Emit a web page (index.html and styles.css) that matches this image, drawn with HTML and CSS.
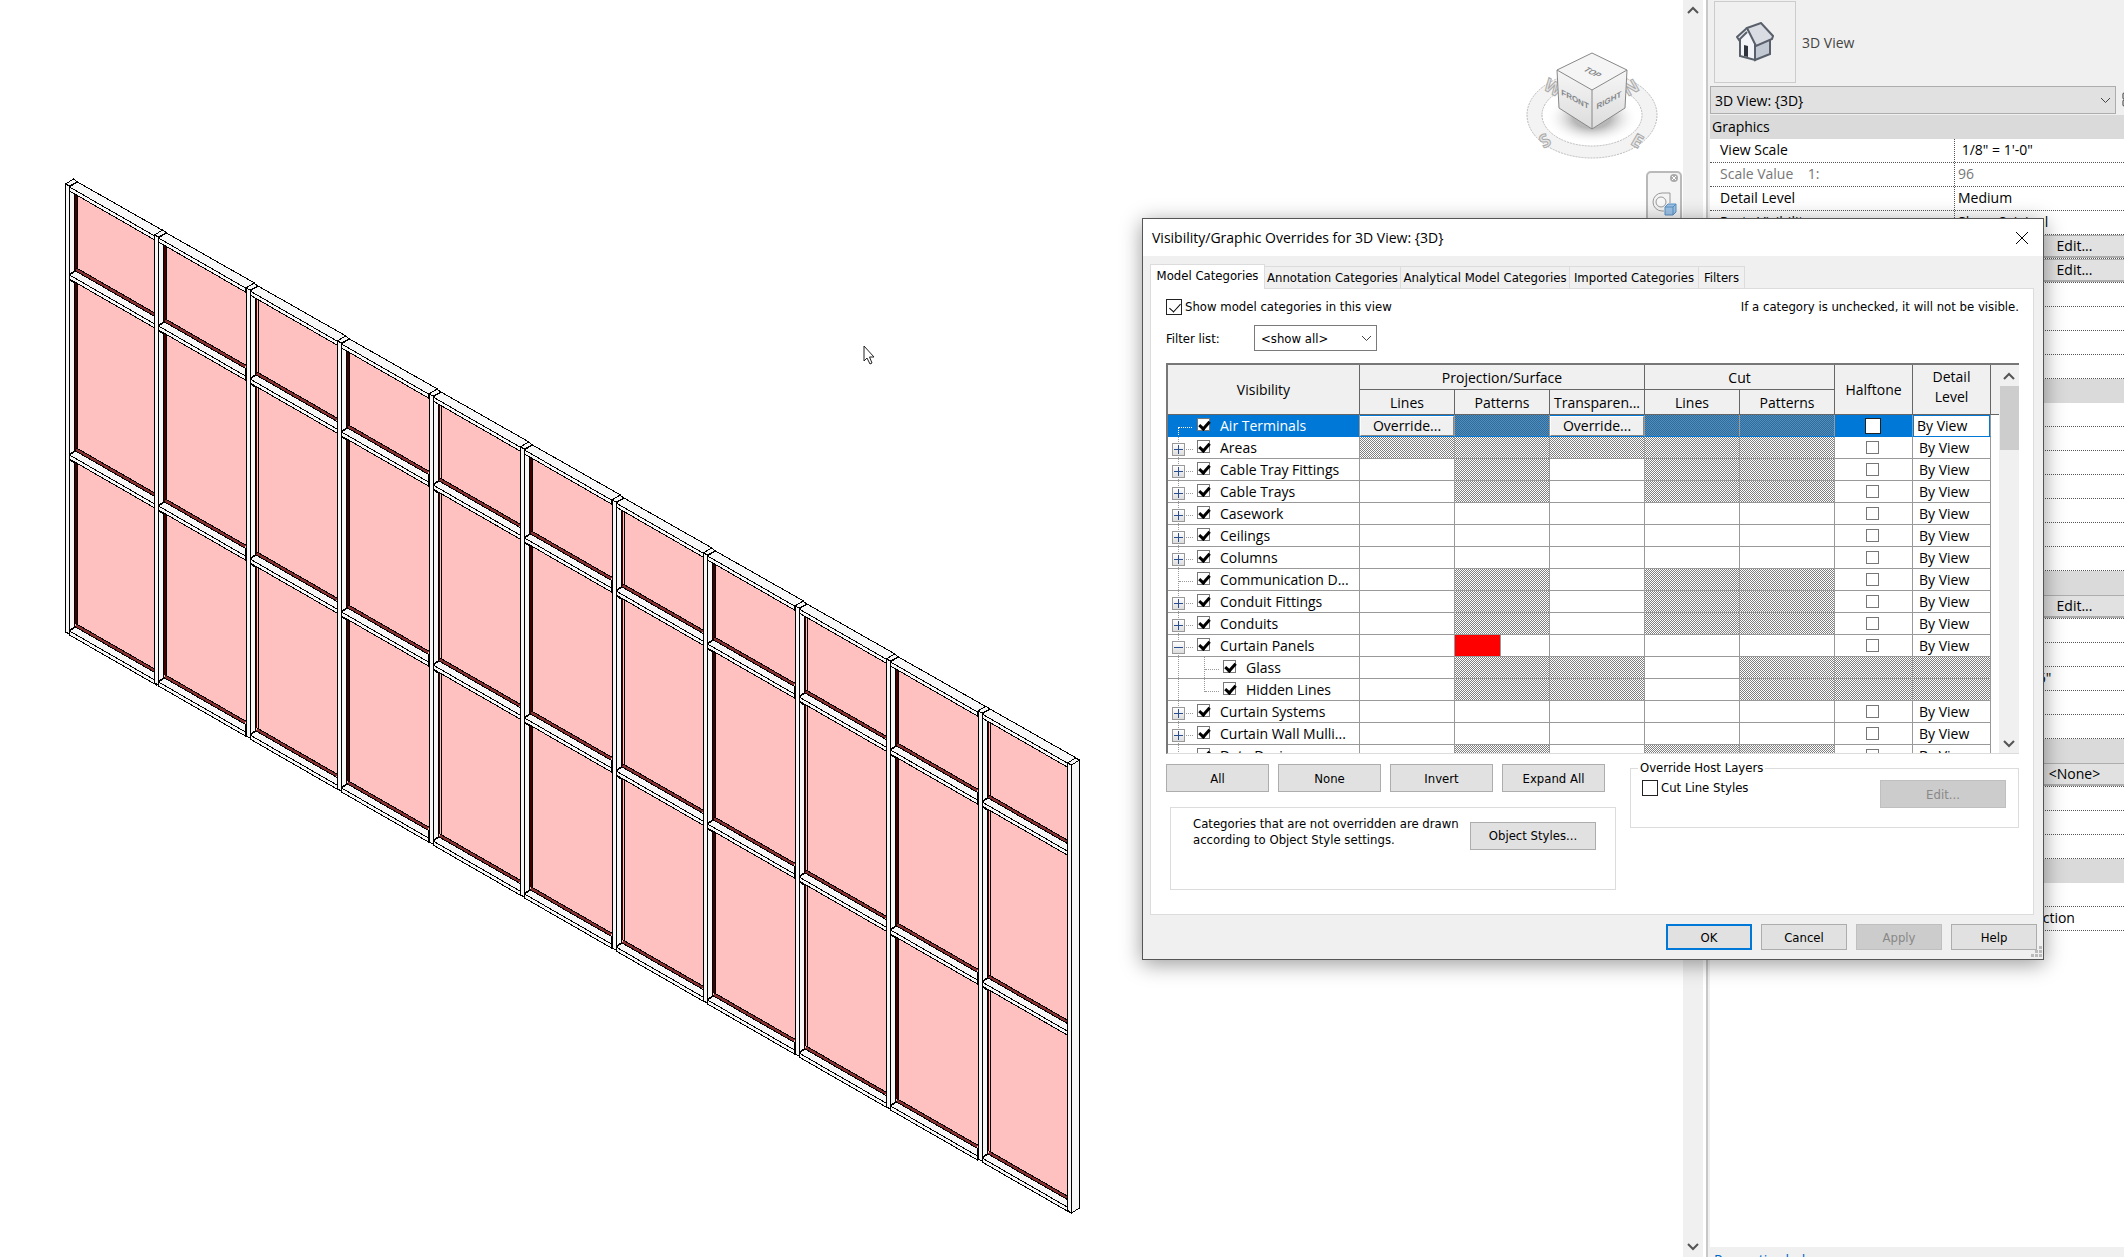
FILE: index.html
```html
<!DOCTYPE html>
<html lang="en">
<head>
    <meta charset="UTF-8">
    <meta name="viewport" content="width=device-width, initial-scale=1.0">
    <title>Visibility/Graphic Overrides</title>
    <link rel="stylesheet" href="styles.css">
</head>
<body>
    <div class="workspace">
        <main class="viewport">
            <svg class="model" width="1120" height="1257" viewBox="0 0 1120 1257" aria-hidden="true">
                <defs>
                    <!-- one bay: glass, rails and the mullion on its left -->
                    <g id="bay">
                        <path class="glass" d="M9 10 L91 57 V497 L9 449 Z"/>
                        <path class="reveal" d="M10 11 V440"/>
                        <path class="edge" d="M12 12 V440"/>
                        <g id="rail">
                            <path class="hatch" d="M11 85.5 L91 131.5"/>
                            <path class="edge" d="M11 84 L91 130"/>
                            <path class="face" d="M4 91 L10 87 L91 133.5 V145 L4 95 Z"/>
                            <path class="edge" d="M4 91 L91 141"/>
                        </g>
                        <use href="#rail" y="180"/>
                        <use href="#rail" y="356"/>
                        <path class="face" d="M4 3 L9 6 V87 L4 90 Z M4 96 L9 99 V267 L4 270 Z M4 276 L9 279 V443 L4 446 Z"/>
                        <path class="top" d="M4 3 L12 -2 L100 48 L91 53 V57 L4 7 Z"/>
                        <path class="edge" d="M4 3 L91 53"/>
                        <path class="face" d="M0 0 L4 2 V450 L0 448 Z"/>
                        <path class="top" d="M0 0 L8 -5 L12 -2 L4 2 Z"/>
                    </g>
                </defs>
                <g id="bays"></g>
                <g transform="translate(1067.5 763)">
                    <path class="face" d="M0 0 L4 2 V450 L0 447 Z"/>
                    <path class="face" d="M4 2 L12 -3 V445 L4 450 Z"/>
                    <path class="top" d="M0 0 L8 -5 L12 -3 L4 2 Z"/>
                </g>
            </svg>

            <svg class="cursor" width="12" height="20" viewBox="0 0 12 20" aria-hidden="true">
                <path d="M1 1 V16 L4 13 L7 19 L9 18 L6.500 12 H11 Z" fill="#fff" stroke="#222"/>
            </svg>

            <svg class="view-cube" width="132" height="110" viewBox="0 0 132 110" aria-hidden="true">
                <defs>
                    <radialGradient id="shade">
                        <stop offset="0.4" stop-color="#999" stop-opacity="0.7"/>
                        <stop offset="1" stop-color="#fff" stop-opacity="0"/>
                    </radialGradient>
                    <linearGradient id="side" x1="0" y1="0" x2="0" y2="1">
                        <stop offset="0" stop-color="#f6f6f6"/>
                        <stop offset="1" stop-color="#dcdcdc"/>
                    </linearGradient>
                </defs>
                <path class="ring" fill-rule="evenodd" d="M1 63 a65 43 0 1 0 130 0 a65 43 0 1 0 -130 0 Z M16 63 a50 31 0 1 0 100 0 a50 31 0 1 0 -100 0 Z"/>
                <ellipse cx="66" cy="66" rx="46" ry="26" fill="url(#shade)"/>
                <g class="compass" text-anchor="middle">
                    <text x="19" y="95" transform="rotate(-30 19 89)">S</text>
                    <text x="111" y="95" transform="rotate(30 111 89)">E</text>
                    <text x="27" y="42" transform="rotate(30 27 36)">W</text>
                    <text x="105" y="42" transform="rotate(-30 105 36)">N</text>
                </g>
                <path d="M31 18 L66 38 V77 L33 56 Z" fill="url(#side)"/>
                <path d="M101 18 L66 38 V77 L99 56 Z" fill="url(#side)"/>
                <path d="M66 1 L101 18 L66 38 L31 18 Z" fill="#f5f5f5"/>
                <path class="cube-edges" d="M66 1 L101 18 L99 56 L66 77 L33 56 L31 18 Z M31 18 L66 38 L101 18 M66 38 V77"/>
                <g class="cube-label">
                    <text transform="translate(49 50) skewY(28)" text-anchor="middle">FRONT</text>
                    <text transform="translate(83 51) skewY(-28)" text-anchor="middle">RIGHT</text>
                    <text transform="translate(64 22) rotate(28) skewX(-30)" text-anchor="middle">TOP</text>
                </g>
            </svg>

            <svg class="nav-bar" width="36" height="80" viewBox="0 0 36 80" aria-hidden="true">
                <rect x="1" y="1" width="34" height="90" rx="4" fill="#f4f4f4" stroke="#b9b9b9" stroke-width="2"/>
                <circle cx="28" cy="7" r="4" fill="#aaa"/>
                <path d="M26 5 L30 9 M30 5 L26 9" stroke="#fff"/>
                <path d="M24 22 H16 A9 9 0 1 0 16 40 H18 M24 22 V32" fill="none" stroke="#999"/>
                <circle cx="15" cy="31" r="5" fill="#f8f8f8" stroke="#999"/>
                <path d="M19 36 L22 33 H30 V41 L27 44 H19 Z" fill="#9cc3e8" stroke="#5b8fc0"/>
                <path d="M19 36 H27 V44 M27 36 L30 33" fill="none" stroke="#5b8fc0"/>
            </svg>
        </main>

        <div class="view-scroll">
            <svg width="12" height="8" viewBox="0 0 12 8"><path d="M1 7 L6 2 L11 7"/></svg>
            <svg width="12" height="8" viewBox="0 0 12 8"><path d="M1 1 L6 6 L11 1"/></svg>
        </div>

        <aside class="properties">
            <div class="type-header">
                <div class="type-image">
                    <svg width="38" height="40" viewBox="0 0 38 40" aria-hidden="true">
                        <path d="M4 15 L13 6 L19 21 V38 L4 34 Z" fill="#f2f4f7" stroke="#59606b" stroke-width="2"/>
                        <path d="M19 22 L34 14 V32 L19 38 Z" fill="#c3c9d2" stroke="#59606b" stroke-width="2"/>
                        <path d="M11 6 L25 1 L37 14 L36 17 L20 24 Z" fill="#d9dde3" stroke="#59606b" stroke-width="2"/>
                        <path d="M11 6 L1 15 L3 18 L11 10" fill="#e8eaee" stroke="#59606b" stroke-width="2"/>
                        <path d="M8 23 L12 24 V35 L8 34 Z" fill="#30353d"/>
                    </svg>
                </div>
                <span>3D View</span>
            </div>
            <div class="type-row">
                <div class="select type-select">
                    <select aria-label="Instance">
                        <option>3D View: {3D}</option>
                    </select>
                    <svg width="11" height="7" viewBox="0 0 11 7"><path d="M1 1 L5.500 5.500 L10 1"/></svg>
                </div>
                <svg class="edit-type" width="16" height="16" viewBox="0 0 16 16"><rect x="1" y="1" width="13" height="6" rx="1"/><rect x="1" y="8" width="13" height="6" rx="1"/></svg>
            </div>
            <div class="prop-list" id="props"></div>
            <div class="help"><a href="#">Properties help</a></div>
        </aside>
    </div>

    <section class="dialog" role="dialog" aria-labelledby="dialog-title">
        <header class="title-bar">
            <h1 id="dialog-title">Visibility/Graphic Overrides for 3D View: {3D}</h1>
            <button class="close" aria-label="Close">
                <svg width="14" height="14" viewBox="0 0 14 14"><path d="M1 1 L13 13 M13 1 L1 13"/></svg>
            </button>
        </header>

        <nav class="tabs">
            <button class="tab active">Model Categories</button>
            <button class="tab">Annotation Categories</button>
            <button class="tab">Analytical Model Categories</button>
            <button class="tab">Imported Categories</button>
            <button class="tab">Filters</button>
        </nav>

        <div class="page">
            <div class="page-top">
                <label class="check"><input type="checkbox" class="box" checked>Show model categories in this view</label>
                <p class="note">If a category is unchecked, it will not be visible.</p>
            </div>
            <div class="filter">
                <label for="filter-list">Filter list:</label>
                <div class="select filter-select">
                    <select id="filter-list">
                        <option>&lt;show all&gt;</option>
                    </select>
                    <svg width="11" height="7" viewBox="0 0 11 7"><path d="M1 1 L5.500 5.500 L10 1"/></svg>
                </div>
            </div>

            <div class="grid">
                <table>
                    <colgroup>
                        <col class="col-name">
                        <col span="5" class="col-override">
                        <col span="2" class="col-level">
                    </colgroup>
                    <thead>
                        <tr>
                            <th rowspan="2">Visibility</th>
                            <th colspan="3">Projection/Surface</th>
                            <th colspan="2">Cut</th>
                            <th rowspan="2">Halftone</th>
                            <th rowspan="2" class="two-line">Detail Level</th>
                        </tr>
                        <tr>
                            <th>Lines</th>
                            <th>Patterns</th>
                            <th>Transparen...</th>
                            <th>Lines</th>
                            <th>Patterns</th>
                        </tr>
                    </thead>
                    <tbody id="rows"></tbody>
                </table>
                <div class="gutter"></div>
                <div class="grid-scroll">
                    <svg width="12" height="8" viewBox="0 0 12 8"><path d="M1 7 L6 2 L11 7"/></svg>
                    <div class="thumb"></div>
                    <svg width="12" height="8" viewBox="0 0 12 8"><path d="M1 1 L6 6 L11 1"/></svg>
                </div>
            </div>

            <div class="page-bottom">
                <div class="bottom-left">
                    <div class="bulk">
                        <button class="btn">All</button>
                        <button class="btn">None</button>
                        <button class="btn">Invert</button>
                        <button class="btn">Expand All</button>
                    </div>
                    <div class="group styles-group">
                        <p>Categories that are not overridden are drawn according to Object Style settings.</p>
                        <button class="btn">Object Styles...</button>
                    </div>
                </div>
                <fieldset class="group host-group">
                    <legend>Override Host Layers</legend>
                    <label class="check"><input type="checkbox" class="box">Cut Line Styles</label>
                    <button class="btn" disabled>Edit...</button>
                </fieldset>
            </div>
        </div>

        <footer class="dialog-footer">
            <button class="btn default">OK</button>
            <button class="btn">Cancel</button>
            <button class="btn" disabled>Apply</button>
            <button class="btn">Help</button>
        </footer>
        <svg class="grip" width="12" height="12" viewBox="0 0 12 12" aria-hidden="true">
            <path d="M9 0 h3 v3 h-3 Z M9 4 h3 v3 h-3 Z M9 8 h3 v3 h-3 Z M5 4 h3 v3 h-3 Z M5 8 h3 v3 h-3 Z M1 8 h3 v3 h-3 Z"/>
        </svg>
    </section>

    <script>
        // cells: proj lines, proj patterns, transparency, cut lines, cut patterns
        // "x" = not available, "." = empty, "o" = override button, "r" = red pattern
        const categories = [
            { name: 'Air Terminals', cells: 'oxoxx', selected: true, first: true },
            { name: 'Areas', cells: 'xxxxx', node: '+' },
            { name: 'Cable Tray Fittings', cells: '.x.xx', node: '+' },
            { name: 'Cable Trays', cells: '.x.xx', node: '+' },
            { name: 'Casework', cells: '.....', node: '+' },
            { name: 'Ceilings', cells: '.....', node: '+' },
            { name: 'Columns', cells: '.....', node: '+' },
            { name: 'Communication D...', cells: '.x.xx' },
            { name: 'Conduit Fittings', cells: '.x.xx', node: '+' },
            { name: 'Conduits', cells: '.x.xx', node: '+' },
            { name: 'Curtain Panels', cells: '.r...', node: '-' },
            { name: 'Glass', cells: '.xx.x', child: true },
            { name: 'Hidden Lines', cells: '.xx.x', child: true, last: true },
            { name: 'Curtain Systems', cells: '.....', node: '+' },
            { name: 'Curtain Wall Mulli...', cells: '.....', node: '+' },
            { name: 'Data Devices', cells: '.x.xx' }
        ];

        function overrideCell(type) {
            if (type === 'x') return '<td class="na"></td>';
            if (type === 'o') return '<td><button class="override">Override...</button></td>';
            if (type === 'r') return '<td><div class="swatch"></div></td>';
            return '<td></td>';
        }

        document.getElementById('rows').innerHTML = categories.map((c, i) => {
            const guide = ['guide', c.first ? 'first' : '', c.child ? 'plain' : ''].join(' ');
            const node = c.node ? `<button class="node ${c.node === '+' ? 'plus' : ''}" aria-label="Expand ${c.name}"></button>` : '';
            const sub = c.child ? `<span class="guide sub ${c.last ? 'last' : ''}"></span>` : '';
            const level = c.selected
                ? `<select class="level" aria-label="Detail level"><option>By View</option></select>`
                : 'By View';
            const tail = c.child
                ? '<td class="na"></td><td class="na"></td>'
                : `<td class="half"><input type="checkbox" aria-label="Halftone ${c.name}"></td><td class="by-view">${level}</td>`;
            return `<tr class="${c.selected ? 'selected' : ''}">
                <td class="name"><div class="tree"><span class="${guide}">${node}</span>${sub}<input type="checkbox" id="cat${i}" checked><label for="cat${i}">${c.name}</label></div></td>
                ${[...c.cells].map(overrideCell).join('')}${tail}
            </tr>`;
        }).join('');

        // instance properties, h = group header, b = button in the value column
        const props = [
            ['h', 'Graphics'], ['', 'View Scale', '&nbsp;1/8" = 1\'-0"'], ['dim', 'Scale Value&nbsp;&nbsp;&nbsp; 1:', '96'],
            ['', 'Detail Level', 'Medium'], ['', 'Parts Visibility', 'Show Original'],
            ['b', '', 'Edit...'], ['b', '', 'Edit...'], [''], [''], [''], [''],
            ['h', ''], [''], [''], [''], [''], [''], [''], [''],
            ['h', ''], ['b', '', 'Edit...'], [''], [''], ['', '', '132\' - 10 5/16"'], ['', '', '26\' - 11 7/32"'], [''],
            ['h', ''], ['b', '', '&lt;None&gt;'], [''], [''], [''],
            ['h', ''], [''], ['', '', 'New Construction']
        ];

        document.getElementById('props').innerHTML = props.map(([kind, name = '', value = '']) => {
            if (kind === 'h') return `<div class="prop-group">${name}</div>`;
            const val = kind === 'b' ? `<button>${value}</button>` : value;
            return `<div class="prop ${kind}"><span>${name}</span><span class="value">${val}</span></div>`;
        }).join('');

        // corner bay is 3 units narrower than the others
        let bays = '';
        for (let i = 0; i < 11; i++) {
            const x = i === 0 ? 65.5 : 63 + i * 91.5;
            const y = 184 + (x - 65.5) * 0.578;
            bays += `<use href="#bay" x="${x}" y="${Math.round(y)}"/>`;
        }
        document.getElementById('bays').innerHTML = bays;
    </script>
</body>
</html>
```
FILE: styles.css
```css
* {
    margin: 0;
    padding: 0;
    box-sizing: border-box;
}

body {
    background: #fff;
    color: #000;
    font-family: 'Open Sans', 'Noto Sans', sans-serif;
    font-size: 14px;
    height: 100vh;
    overflow: hidden;
}

button,
select,
input {
    font: inherit;
    color: inherit;
}

.workspace {
    display: flex;
    height: 100vh;
}

.viewport {
    flex: 1;
    position: relative;
    overflow: hidden;
}

/* model */
.model {
    display: block;
    shape-rendering: crispEdges;
}

.glass {
    fill: #ffc0c0;
}

.face,
.top {
    fill: #f7f7f7;
    stroke: #000;
}

.edge {
    fill: none;
    stroke: #000;
}

.reveal {
    fill: none;
    stroke: #400000;
    stroke-width: 2;
}

.hatch {
    fill: none;
    stroke: #8a3030;
    stroke-width: 3;
}

.cursor {
    position: absolute;
    left: 863px;
    top: 345px;
}

.view-cube {
    position: absolute;
    right: 25px;
    top: 52px;
}

.ring {
    fill: #f3f3f3;
    stroke: #bbb;
    stroke-dasharray: 2 1;
}

.compass {
    font-size: 18px;
    font-weight: bold;
    fill: #e6e6e6;
    stroke: #aaa;
}

.cube-edges {
    fill: none;
    stroke: #888;
}

.cube-label {
    font-family: 'Liberation Sans', sans-serif;
    font-size: 8px;
    font-weight: bold;
    fill: #85888b;
}

.nav-bar {
    position: absolute;
    right: 1px;
    top: 171px;
}

.view-scroll {
    width: 20px;
    background: #f0f0f0;
    display: flex;
    flex-direction: column;
    justify-content: space-between;
    align-items: center;
    padding: 6px 0;
}

.view-scroll path,
.grid-scroll path {
    fill: none;
    stroke: #555;
    stroke-width: 2;
}

/* properties palette */
.properties {
    flex: 0 0 418px;
    margin-left: 3px;
    border-left: 2px solid #c8c8c8;
    padding-left: 2px;
    background: #f0f0f0;
    display: flex;
    flex-direction: column;
    overflow: hidden;
}

.type-header {
    display: flex;
    align-items: center;
    gap: 6px;
    height: 86px;
    padding: 0 0 2px 4px;
    color: #444;
}

.type-image {
    width: 82px;
    height: 82px;
    border: 1px solid #ccc;
    display: flex;
    align-items: center;
    justify-content: center;
}

.type-row {
    display: flex;
    align-items: center;
    gap: 6px;
    height: 29px;
    padding-bottom: 1px;
}

.select {
    position: relative;
    display: flex;
    align-items: center;
}

.select select {
    appearance: none;
    width: 100%;
    height: 100%;
    border: 1px solid #7a7a7a;
    border-radius: 0;
    background: #fff;
    padding-left: 6px;
}

.select svg {
    position: absolute;
    right: 5px;
    fill: none;
    stroke: #444;
}

.type-select {
    flex: 0 0 406px;
    height: 28px;
}

.type-select select {
    background: #e1e1e1;
    border-color: #adadad;
    padding-left: 4px;
}

.edit-type {
    flex: none;
    fill: #fff;
    stroke: #333;
}

.prop-list {
    flex: 1;
    background: #fff;
}

.prop-group {
    height: 24px;
    line-height: 23px;
    padding-left: 2px;
    background: #dadada;
}

.prop {
    display: grid;
    grid-template-columns: 244px 240px;
    height: 24px;
    line-height: 22px;
    border-bottom: 1px dotted #555;
}

.prop > span {
    padding-left: 10px;
    white-space: nowrap;
}

.prop > .value {
    border-left: 1px dotted #555;
    padding-left: 3px;
}

.prop.dim {
    color: #777;
}

.prop.b > .value {
    padding: 0;
}

.prop button {
    display: block;
    width: 100%;
    height: 23px;
    line-height: 20px;
    border: 1px solid #adadad;
    border-bottom-width: 2px;
    background: #e1e1e1;
}

.help {
    height: 10px;
    padding: 5px 0 0 4px;
    line-height: 16px;
    overflow: hidden;
}

.help a {
    color: #0066cc;
    text-decoration: none;
}

/* dialog */
.dialog {
    position: absolute;
    top: 218px;
    right: 80px;
    width: 902px;
    border: 1px solid #555;
    background: #f0f0f0;
    box-shadow: 0 4px 20px rgba(0, 0, 0, 0.4);
    font-family: 'DejaVu Sans Condensed', 'DejaVu Sans', sans-serif;
    font-size: 13px;
}

.title-bar {
    display: flex;
    align-items: center;
    justify-content: space-between;
    height: 37px;
    padding: 0 14px 0 9px;
    background: #fff;
}

.title-bar h1 {
    font-family: 'Open Sans', 'Noto Sans', sans-serif;
    font-size: 14px;
    font-weight: normal;
}

.close {
    display: flex;
    border: none;
    background: none;
}

.close path {
    stroke: #000;
}

.tabs {
    display: grid;
    grid-template-columns: 115px 136px 169px 129px 46px;
    align-items: end;
    height: 32px;
    padding: 0 7px;
}

.tab {
    height: 22px;
    border: 1px solid #dcdcdc;
    border-left: none;
    border-bottom: none;
    background: #f0f0f0;
    white-space: nowrap;
}

.tab.active {
    position: relative;
    height: 25px;
    margin-bottom: -1px;
    padding-bottom: 3px;
    border-left: 1px solid #dcdcdc;
    background: #fff;
}

.page {
    height: 627px;
    margin: 0 9px 0 7px;
    padding: 10px 14px 0 15px;
    border: 1px solid #dcdcdc;
    background: #fff;
}

.page-top {
    display: flex;
    justify-content: space-between;
    height: 26px;
    line-height: 16px;
}

.check {
    display: flex;
    gap: 3px;
    height: 16px;
    line-height: 16px;
}

.filter {
    display: flex;
    align-items: center;
    height: 26px;
}

.filter label {
    width: 88px;
}

.filter-select {
    width: 123px;
    height: 26px;
}

input[type="checkbox"] {
    appearance: none;
    flex: none;
    position: relative;
    width: 13px;
    height: 13px;
    border: 1px solid #777;
    background: #fff;
}

input[type="checkbox"]:checked::after {
    content: '';
    position: absolute;
    left: 3px;
    top: 0;
    width: 4px;
    height: 8px;
    border: solid #000;
    border-width: 0 3px 3px 0;
    transform: rotate(42deg);
}

input[type="checkbox"].box {
    width: 16px;
    height: 16px;
    border-color: #222;
}

input[type="checkbox"].box:checked::after {
    left: 5px;
    top: 1px;
    width: 5px;
    height: 10px;
    border-width: 0 1px 1px 0;
}

/* category grid */
.grid {
    display: flex;
    height: 391px;
    margin-top: 12px;
    border: 1px solid #777;
    border-width: 2px 0 0 2px;
    border-bottom: 1px solid #dcdcdc;
    overflow: hidden;
    font-family: 'Open Sans', 'Noto Sans', sans-serif;
    font-size: 14px;
}

.gutter {
    flex: 1;
    height: 50px;
    border-bottom: 1px solid #666;
    background: #f0f0f0;
}

table {
    table-layout: fixed;
    width: 822px;
    border-collapse: separate;
    border-spacing: 0;
}

.col-name {
    width: 192px;
}

.col-override {
    width: 95px;
}

.col-level {
    width: 78px;
}

th {
    height: 25px;
    padding-top: 1px;
    line-height: 20px;
    border: solid #666;
    border-width: 0 1px 1px 0;
    background: #f0f0f0;
    font-weight: normal;
}

.two-line {
    padding: 0 12px 6px;
}

td {
    height: 22px;
    border: solid #999;
    border-width: 0 1px 1px 0;
    line-height: 20px;
    white-space: nowrap;
}

.na {
    background: repeating-conic-gradient(#808080 0 25%, #fff 0 50%) 0 0 / 2px 2px;
}

.tree {
    display: flex;
    height: 21px;
    overflow: hidden;
}

.tree input {
    margin: 3px 0 0 3px;
}

.tree label {
    padding: 1px 0 0 10px;
}

.guide {
    position: relative;
    width: 16px;
    margin-left: 10px;
    border-left: 1px dotted #999;
}

.guide::before {
    content: '';
    position: absolute;
    left: 0;
    top: 12px;
    width: 14px;
    border-top: 1px dotted #999;
}

.guide.plain::before {
    display: none;
}

.guide.first {
    border-left: none;
}

.guide.first::after {
    content: '';
    position: absolute;
    top: 12px;
    height: 10px;
    border-left: 1px dotted #fff;
}

.guide.first::before {
    border-color: #fff;
}

.guide.sub {
    margin-left: 10px;
}

.guide.sub.last {
    height: 13px;
}

.node {
    position: absolute;
    z-index: 1;
    left: -7px;
    top: 6px;
    width: 13px;
    height: 13px;
    border: 1px solid #999;
    background:
        linear-gradient(#2a4d8f, #2a4d8f) center / 9px 1px no-repeat,
        linear-gradient(#fff, #ddd);
}

.node.plus {
    background:
        linear-gradient(#2a4d8f, #2a4d8f) center / 9px 1px no-repeat,
        linear-gradient(#2a4d8f, #2a4d8f) center / 1px 9px no-repeat,
        linear-gradient(#fff, #ddd);
}

.half {
    padding-right: 2px;
}

.half input {
    display: block;
    margin: 0 auto;
}

.by-view {
    padding: 1px 0 0 6px;
}

.swatch {
    width: 46px;
    height: 21px;
    border-right: 1px solid #999;
    background: #f00;
}

.override {
    display: block;
    width: 94px;
    height: 20px;
    line-height: 18px;
    border: 1px solid #fff;
    border-right-color: #888;
    border-bottom-color: #888;
    background: #f0f0f0;
}

.selected td {
    background-color: #0078d7;
    border-bottom-color: #0078d7;
}

.selected .na {
    background: repeating-conic-gradient(#808080 0 25%, #0078d7 0 50%) 0 0 / 2px 2px;
}

.selected label {
    flex: 1;
    color: #fff;
}

.selected .half input {
    width: 16px;
    height: 16px;
    border-color: #222;
}

.selected .by-view {
    padding: 0 1px;
}

.level {
    appearance: none;
    display: block;
    width: 100%;
    height: 20px;
    border: none;
    border-radius: 0;
    background: #fff;
    padding-left: 3px;
}

.grid-scroll {
    display: flex;
    flex-direction: column;
    align-items: center;
    width: 20px;
    padding: 7px 0 5px;
    background: #f0f0f0;
}

.grid-scroll svg:last-child {
    margin-top: auto;
}

.thumb {
    width: 19px;
    height: 64px;
    margin-top: 6px;
    background: #cdcdcd;
}

/* below the grid */
.page-bottom {
    display: flex;
    justify-content: space-between;
    align-items: flex-start;
    padding-top: 10px;
}

.btn {
    height: 28px;
    border: 1px solid #adadad;
    background: #e1e1e1;
}

.btn:disabled {
    background: #ccc;
    border-color: #bfbfbf;
    color: #888;
}

.bulk {
    display: grid;
    grid-template-columns: repeat(4, 103px);
    gap: 9px;
}

.group {
    border: 1px solid #dcdcdc;
}

.styles-group {
    display: flex;
    align-items: flex-start;
    justify-content: space-between;
    width: 446px;
    height: 83px;
    margin: 15px 0 0 4px;
    padding: 8px 19px 0 22px;
    line-height: 16px;
}

.styles-group p {
    width: 268px;
}

.styles-group .btn {
    width: 126px;
    margin-top: 6px;
}

.host-group {
    display: flex;
    justify-content: space-between;
    width: 389px;
    height: 68px;
    margin-top: -4px;
    padding: 4px 12px 0 11px;
}

.host-group legend {
    height: 16px;
    line-height: 16px;
    margin-left: -4px;
    padding: 0 2px;
}

.host-group .btn {
    width: 126px;
}

.dialog-footer {
    display: flex;
    justify-content: flex-end;
    gap: 9px;
    padding: 9px 6px 9px 0;
}

.dialog-footer .btn {
    width: 86px;
    height: 26px;
}

.dialog-footer .default {
    border: 2px solid #0078d7;
}

.grip {
    position: absolute;
    right: 1px;
    bottom: 1px;
    fill: #bbb;
}
```
